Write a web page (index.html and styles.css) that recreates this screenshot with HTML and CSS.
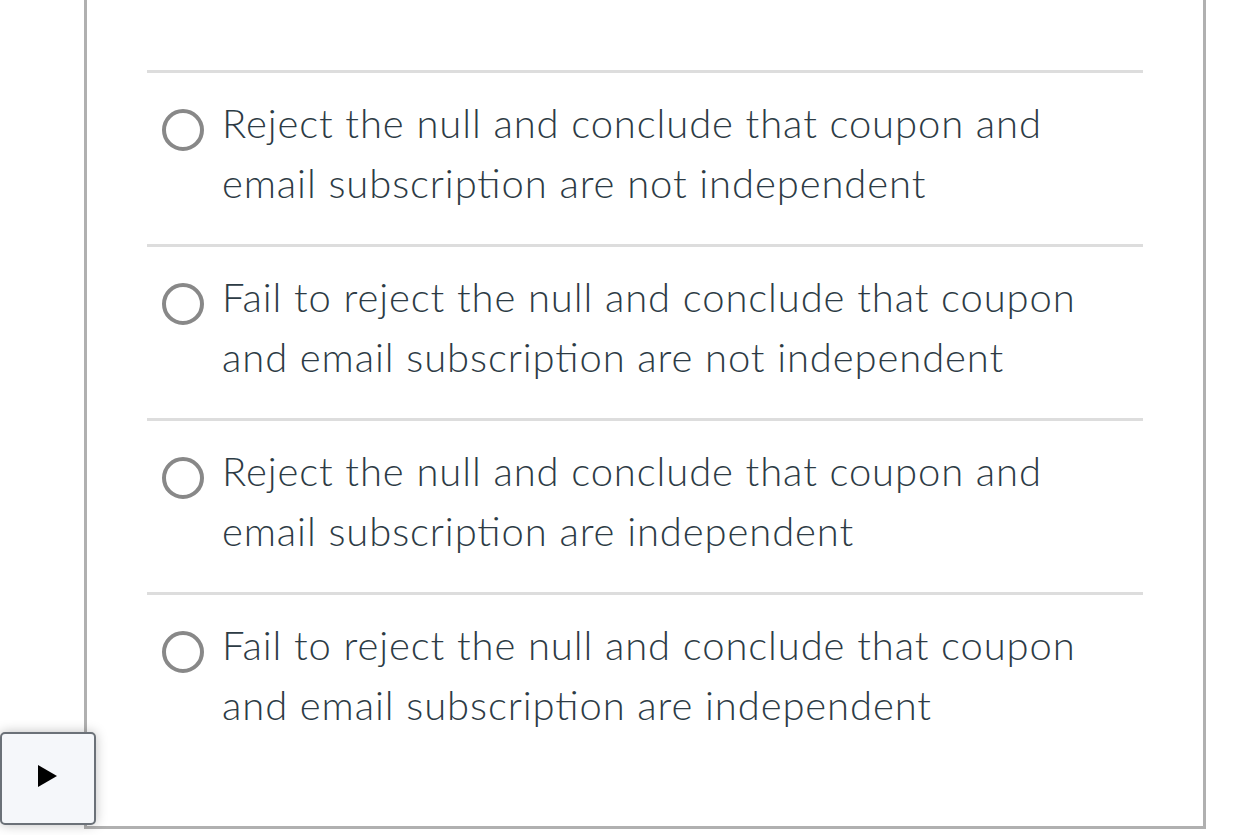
FILE: index.html
```html
<!DOCTYPE html>
<html lang="en">
<head>
<meta charset="utf-8">
<title>Quiz answers</title>
<link rel="stylesheet" href="styles.css">
</head>
<body>
<div class="panel">
  <ul class="answers">
    <li class="answer">
      <span class="radio"></span>
      <span class="label">Reject the null and conclude that coupon and email subscription are not independent</span>
    </li>
    <li class="answer">
      <span class="radio"></span>
      <span class="label">Fail to reject the null and conclude that coupon and email subscription are not independent</span>
    </li>
    <li class="answer">
      <span class="radio"></span>
      <span class="label">Reject the null and conclude that coupon and email subscription are independent</span>
    </li>
    <li class="answer">
      <span class="radio"></span>
      <span class="label">Fail to reject the null and conclude that coupon and email subscription are independent</span>
    </li>
  </ul>
</div>
<button class="play-btn" aria-label="Play">
  <svg width="20" height="22" viewBox="0 0 20 22"><path d="M0 0 L19 11 L0 22 Z" fill="#000"/></svg>
</button>
</body>
</html>
```
FILE: styles.css
```css
html, body {
  margin: 0;
  padding: 0;
  background: #fff;
}
body {
  font-family: Lato, "Open Sans", sans-serif;
  color: #2d3b45;
  height: 835px;
  overflow: hidden;
}
.panel {
  margin-left: 84px;
  width: 1122px;
  box-sizing: border-box;
  border: 3px solid #b0b0b0;
  border-top: none;
  padding: 70px 60px 60px;
}
.answers {
  list-style: none;
  margin: 0;
  padding: 0;
}
.answer {
  display: flex;
  align-items: flex-start;
  border-top: 3px solid #dddddd;
  padding: 20px 0 31px;
}
.radio {
  flex: none;
  width: 42px;
  height: 42px;
  box-sizing: border-box;
  border: 4px solid #888888;
  border-radius: 50%;
  margin: 16px 18px 0 15px;
}
.label {
  font-size: 40px;
  font-weight: 300;
  letter-spacing: 0.9px;
  line-height: 60px;
  max-width: 885px;
  font-feature-settings: "liga" 1;
}
.play-btn {
  position: absolute;
  left: 0;
  top: 732px;
  width: 96px;
  height: 93px;
  box-sizing: border-box;
  border: 2px solid #6b7178;
  border-radius: 5px;
  background: #f5f7fa;
  box-shadow: 0 0 12px rgba(0, 0, 0, 0.25);
  display: flex;
  align-items: center;
  justify-content: center;
  padding: 0 0 6px 0;
  margin: 0;
}
.play-btn svg {
  display: block;
}
```
